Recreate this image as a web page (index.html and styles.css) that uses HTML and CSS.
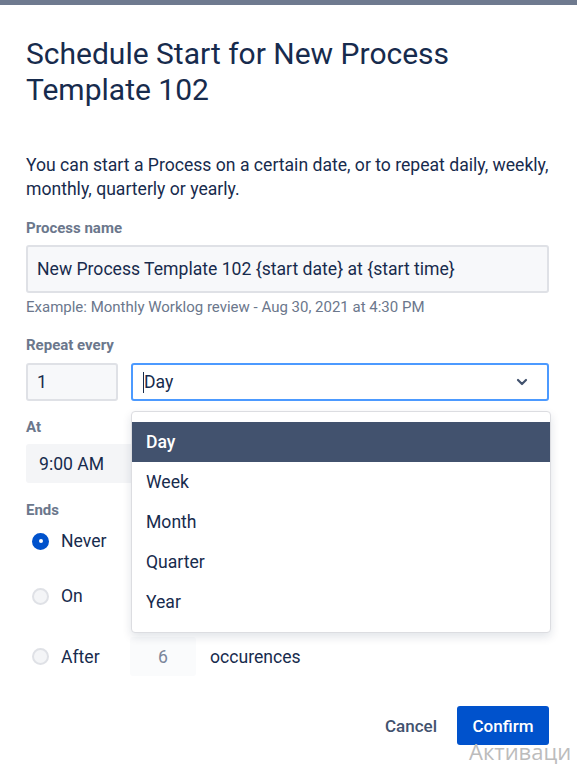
FILE: index.html
```html
<!DOCTYPE html>
<html lang="en">
<head>
    <meta charset="UTF-8">
    <meta name="viewport" content="width=device-width, initial-scale=1.0">
    <title>Schedule Start</title>
    <link rel="stylesheet" href="styles.css">
</head>
<body>
    <div class="topbar"></div>
    <div class="dialog">
        <h1 class="title">Schedule Start for New Process Template 102</h1>
        <p class="intro">You can start a Process on a certain date, or to repeat daily, weekly, monthly, quarterly or yearly.</p>

        <div class="label first">Process name</div>
        <div class="field name-field">New Process Template 102 {start date} at {start time}</div>
        <div class="hint">Example: Monthly Worklog review - Aug 30, 2021 at 4:30 PM</div>

        <div class="label repeat-label">Repeat every</div>
        <div class="repeat-row">
            <div class="field count-field">1</div>
            <div class="select-wrap">
                <div class="select"><span class="caret"></span>Day
                    <svg class="chevron" width="12" height="8" viewBox="0 0 12 8"><path d="M2 2 L6 6 L10 2" fill="none" stroke="#42526e" stroke-width="2.2" stroke-linecap="round" stroke-linejoin="round"/></svg>
                </div>
                <ul class="menu">
                    <li class="selected">Day</li>
                    <li>Week</li>
                    <li>Month</li>
                    <li>Quarter</li>
                    <li>Year</li>
                </ul>
            </div>
        </div>

        <div class="label at-label">At</div>
        <div class="field time-field">9:00 AM</div>

        <div class="label ends-label">Ends</div>
        <div class="radio-row never-row"><span class="radio checked"></span>Never</div>
        <div class="radio-row on-row"><span class="radio"></span>On</div>
        <div class="radio-row after-row">
            <span class="radio"></span><span class="after-text">After</span>
            <div class="occ-field">6</div>
            <span class="occ-text">occurences</span>
        </div>

        <div class="footer">
            <button class="btn cancel">Cancel</button>
            <button class="btn confirm">Confirm</button>
        </div>
    </div>
    <div class="watermark">Активаци</div>
</body>
</html>
```

FILE: styles.css
```css
body {
    margin: 0;
    font-family: Roboto, "Noto Sans", sans-serif;
    color: #172b4d;
    background: #ffffff;
    width: 577px;
    height: 765px;
    overflow: hidden;
    position: relative;
}
.topbar {
    height: 5px;
    background-color: #6f7a8f;
}
.dialog {
    padding: 0 28px 0 26px;
}
.title {
    margin: 31px 0 0;
    max-width: 450px;
    font-size: 30px;
    line-height: 36px;
    font-weight: 400;
    color: #172b4d;
}
.intro {
    margin: 45px 0 0;
    font-size: 17.6px;
    line-height: 24px;
}
.label {
    font-size: 15px;
    line-height: 20px;
    font-weight: 700;
    color: #6b778c;
}
.label.first {
    margin-top: 17px;
}
.field {
    box-sizing: border-box;
    background-color: #f4f5f7;
    border: 2px solid #dfe1e6;
    border-radius: 3px;
    font-size: 17.6px;
    display: flex;
    align-items: center;
}
.name-field {
    margin-top: 7px;
    height: 48px;
    padding-left: 9px;
    background-color: #f7f8fa;
}
.hint {
    margin-top: 6px;
    font-size: 15px;
    line-height: 16px;
    color: #6b778c;
}
.repeat-label {
    margin-top: 20px;
}
.repeat-row {
    margin-top: 8px;
    display: flex;
    gap: 13px;
}
.count-field {
    width: 92px;
    height: 38px;
    padding-left: 9px;
    background-color: #f7f8fa;
}
.select-wrap {
    flex-grow: 1;
    position: relative;
}
.select {
    box-sizing: border-box;
    height: 38px;
    border: 2px solid #4c9aff;
    border-radius: 3px;
    background: #ffffff;
    display: flex;
    align-items: center;
    padding-left: 10px;
    font-size: 17.6px;
}
.caret {
    display: inline-block;
    width: 1px;
    height: 21px;
    background: #172b4d;
}
.chevron {
    margin-left: auto;
    margin-right: 19px;
}
.menu {
    position: absolute;
    top: calc(100% + 10px);
    left: 0;
    right: -2px;
    margin: 0;
    padding: 10px 0;
    list-style: none;
    background: #ffffff;
    border: 1px solid #dcdde1;
    border-radius: 4px;
    box-shadow: 0 4px 10px rgba(9, 30, 66, 0.12);
    z-index: 2;
}
.menu li {
    height: 40px;
    line-height: 40px;
    padding-left: 14px;
    font-size: 17.6px;
    color: #172b4d;
}
.menu li.selected {
    background-color: #42526e;
    color: #ffffff;
    font-weight: 500;
}
.at-label {
    margin-top: 16px;
}
.time-field {
    margin-top: 7px;
    width: 170px;
    height: 39px;
    padding-left: 13px;
    border: none;
}
.ends-label {
    margin-top: 17px;
}
.radio-row {
    display: flex;
    align-items: center;
    font-size: 17.6px;
    height: 40px;
}
.never-row {
    margin-top: 1px;
}
.on-row {
    margin-top: 15px;
}
.after-row {
    margin-top: 21px;
    height: 39px;
}
.radio {
    box-sizing: border-box;
    width: 17px;
    height: 17px;
    border-radius: 50%;
    border: 2px solid #dfe1e6;
    background: #f4f5f7;
    margin: 0 12px 0 6px;
    position: relative;
}
.radio.checked {
    border-color: #0052cc;
    background: #0052cc;
}
.radio.checked::after {
    content: "";
    position: absolute;
    left: 4.5px;
    top: 4.5px;
    width: 4px;
    height: 4px;
    border-radius: 50%;
    background: #ffffff;
}
.after-text {
    width: 69px;
}
.occ-field {
    width: 66px;
    height: 39px;
    background: #fafbfc;
    border-radius: 3px;
    display: flex;
    align-items: center;
    justify-content: center;
    color: #7a869a;
}
.occ-text {
    margin-left: 14px;
}
.footer {
    margin-top: 30px;
    display: flex;
    justify-content: flex-end;
    align-items: center;
    gap: 20px;
}
.btn {
    font-family: Roboto, "Noto Sans", sans-serif;
    font-size: 17px;
    font-weight: 500;
    border: none;
    border-radius: 3px;
    height: 39px;
    cursor: pointer;
}
.cancel {
    background: none;
    color: #42526e;
    padding: 0;
}
.confirm {
    background-color: #0052cc;
    color: #ffffff;
    padding: 0;
    width: 92px;
}
.watermark {
    position: absolute;
    left: 469px;
    top: 736px;
    font-family: "Open Sans", "Noto Sans", sans-serif;
    font-size: 22px;
    color: #bcbcbc;
    white-space: nowrap;
}
```
